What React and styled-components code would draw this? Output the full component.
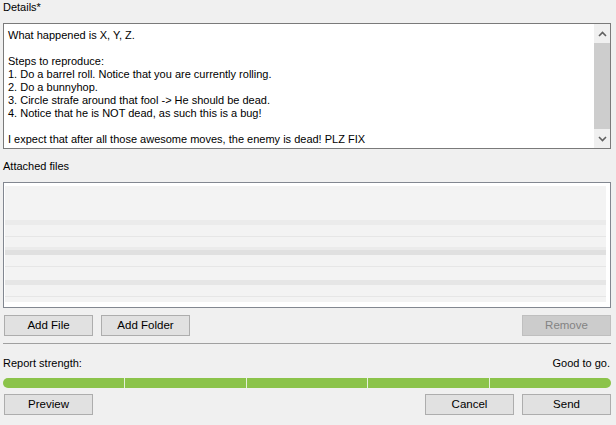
import styled, { createGlobalStyle } from 'styled-components';

const GlobalStyle = createGlobalStyle`
  html, body {
    margin: 0;
    padding: 0;
    background: #f0f0f0;
  }
  body {
    font-family: 'Liberation Sans', Arial, sans-serif;
    font-size: 11px;
    color: #000;
  }
`;

const Page = styled.div`
  width: 608px;
  padding: 1px 5px 0 3px;
  display: flex;
  flex-direction: column;
`;

const Label = styled.div`
  height: 13px;
  line-height: 13px;
  margin-top: ${(p) => p.top || 0}px;
`;

const TextBox = styled.div`
  margin-top: 9px;
  height: 124px;
  border: 1px solid #7a7a7a;
  background: #fff;
  display: flex;
`;

const TextLines = styled.div`
  flex: 1;
  padding: 5px 0 0 4px;
  line-height: 13px;
  white-space: pre;
  overflow: hidden;
`;

const Scrollbar = styled.div`
  width: 16px;
  display: flex;
  flex-direction: column;
  background: #f0f0f0;
`;

const Arrow = styled.div`
  height: 19px;
  display: flex;
  align-items: center;
  justify-content: center;
  svg {
    display: block;
  }
`;

const Thumb = styled.div`
  flex: 1;
  background: #cdcdcd;
`;

const FileList = styled.div`
  box-sizing: border-box;
  margin-top: 9px;
  height: 126px;
  border: 1px solid #828790;
  background: #fff;
  padding: 1px 4px 5px 1px;
  display: flex;
  flex-direction: column;
  overflow: hidden;
`;

const Stripe = styled.div`
  flex: none;
  height: ${(p) => p.h}px;
  background: ${(p) => p.c};
`;

const ButtonRow = styled.div`
  display: flex;
  align-items: center;
  gap: 8px;
  margin: ${(p) => p.m || '0'};
  padding-left: 1px;
`;

const Spacer = styled.div`
  flex: 1;
`;

const Button = styled.button`
  width: 89px;
  height: 21px;
  box-sizing: border-box;
  margin: 0;
  padding: 0;
  border: 1px solid ${(p) => (p.disabled ? '#bfbfbf' : '#adadad')};
  background: ${(p) => (p.disabled ? '#cccccc' : '#e1e1e1')};
  color: ${(p) => (p.disabled ? '#838383' : '#000')};
  font-family: inherit;
  font-size: 11.5px;
  line-height: 19px;
`;

const Separator = styled.div`
  margin-top: 7px;
  height: 1px;
  background: #a0a0a0;
`;

const StrengthRow = styled.div`
  margin-top: 13px;
  display: flex;
  justify-content: space-between;
  line-height: 13px;
  height: 13px;
`;

const StatusText = styled.span`
  padding-right: 1px;
`;

const Bar = styled.div`
  margin-top: 8px;
  height: 10px;
  display: flex;
  border-radius: 5px;
  overflow: hidden;
  gap: 1px;
  background: #e6f0dc;
`;

const Segment = styled.div`
  flex: 1;
  background: #8bc34a;
`;

const Chevron = ({ up }) => (
  <svg width="9" height="6" viewBox="0 0 9 6">
    <path
      d={up ? 'M1 5 L4.5 1.5 L8 5' : 'M1 1 L4.5 4.5 L8 1'}
      fill="none"
      stroke="#606060"
      strokeWidth="1.6"
    />
  </svg>
);

const detailsText = `What happened is X, Y, Z.

Steps to reproduce:
1. Do a barrel roll. Notice that you are currently rolling.
2. Do a bunnyhop.
3. Circle strafe around that fool -> He should be dead.
4. Notice that he is NOT dead, as such this is a bug!

I expect that after all those awesome moves, the enemy is dead! PLZ FIX`;

const stripes = [
  { h: 2, c: '#ffffff' },
  { h: 34, c: '#f3f3f3' },
  { h: 5, c: '#ebebeb' },
  { h: 11, c: '#f3f3f3' },
  { h: 1, c: '#e6e6e6' },
  { h: 10, c: '#f3f3f3' },
  { h: 3, c: '#ebebeb' },
  { h: 5, c: '#e0e0e0' },
  { h: 11, c: '#f3f3f3' },
  { h: 1, c: '#e6e6e6' },
  { h: 13, c: '#f3f3f3' },
  { h: 5, c: '#e6e6e6' },
  { h: 11, c: '#f3f3f3' },
  { h: 1, c: '#e6e6e6' },
  { h: 5, c: '#f3f3f3' },
];

export default function App() {
  return (
    <>
      <GlobalStyle />
      <Page>
        <Label>Details*</Label>
        <TextBox>
          <TextLines>{detailsText}</TextLines>
          <Scrollbar>
            <Arrow>
              <Chevron up />
            </Arrow>
            <Thumb />
            <Arrow>
              <Chevron />
            </Arrow>
          </Scrollbar>
        </TextBox>

        <Label top={11}>Attached files</Label>
        <FileList>
          {stripes.map((s, i) => (
            <Stripe key={i} h={s.h} c={s.c} />
          ))}
        </FileList>

        <ButtonRow m="7px 0 0 0">
          <Button>Add File</Button>
          <Button>Add Folder</Button>
          <Spacer />
          <Button disabled>Remove</Button>
        </ButtonRow>

        <Separator />

        <StrengthRow>
          <span>Report strength:</span>
          <StatusText>Good to go.</StatusText>
        </StrengthRow>
        <Bar>
          {[0, 1, 2, 3, 4].map((i) => (
            <Segment key={i} />
          ))}
        </Bar>

        <ButtonRow m="6px 0 0 0">
          <Button>Preview</Button>
          <Spacer />
          <Button>Cancel</Button>
          <Button>Send</Button>
        </ButtonRow>
      </Page>
    </>
  );
}
